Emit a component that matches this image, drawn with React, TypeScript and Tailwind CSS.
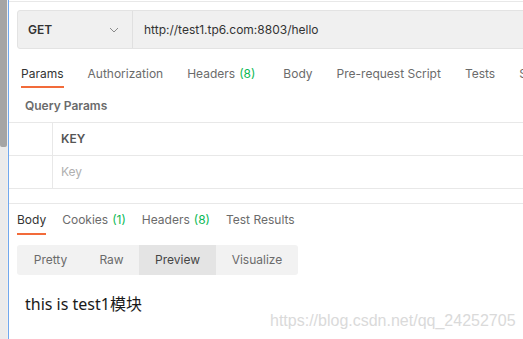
import React from "react";

const inter = { fontFamily: "Inter, 'Noto Sans', sans-serif" };

function Tab({
  label,
  count,
  active,
  className = "",
}: {
  label: string;
  count?: string;
  active?: boolean;
  className?: string;
}) {
  return (
    <div className={"relative h-full flex items-center shrink-0 whitespace-nowrap " + className}>
      <span className={active ? "text-[#333333]" : "text-[#6b6b6b]"}>{label}</span>
      {count && <span className="ml-[4px] text-[#0cb955]">{count}</span>}
      {active && <div className="absolute left-0 right-0 bottom-0 h-[2px] bg-[#f26b3a]" />}
    </div>
  );
}

export default function App() {
  return (
    <div className="w-[523px] h-[339px] bg-white overflow-hidden flex text-[12px]" style={inter}>
      {/* scrollbar */}
      <div className="w-[7px] h-full bg-[#ebebeb] shrink-0 flex flex-col">
        <div className="h-[147px] bg-[#a5a5a5] rounded-b-[2px]" />
      </div>
      <div className="w-[1px] h-full bg-[#f0f0f0] shrink-0" />
      <div className="w-[1px] h-full bg-[#70a8ee] shrink-0" />
      {/* main */}
      <div className="flex-1 min-w-0 flex flex-col relative">
        <div className="h-[1px] bg-white" />
        <div className="h-[1px] bg-[#e8e8e8]" />
        {/* url bar */}
        <div className="mt-[8px] ml-[8px] w-[560px] h-[39px] bg-[#f0f0f0] border border-[#e3e3e3] rounded-[3px] flex items-center shrink-0">
          <div className="w-[115px] h-full flex items-center justify-between pl-[10px] pr-[13px] border-r border-[#e0e0e0] shrink-0">
            <span className="font-semibold text-[#333333] text-[12px]">GET</span>
            <svg width="10" height="6" viewBox="0 0 10 6" fill="none">
              <path d="M1 1l4 4 4-4" stroke="#8a8a8a" strokeWidth="1" />
            </svg>
          </div>
          <span className="ml-[11px] text-[#333333] text-[12px]">http://test1.tp6.com:8803/hello</span>
        </div>
        {/* request tabs */}
        <div className="mt-[10px] h-[29px] flex gap-6 pl-[12px] shrink-0">
          <Tab label="Params" active />
          <Tab label="Authorization" />
          <Tab label="Headers" count="(8)" />
          <Tab label="Body" className="ml-[4px]" />
          <Tab label="Pre-request Script" />
          <Tab label="Tests" />
          <Tab label="Settings" />
        </div>
        {/* query params */}
        <div className="h-[34px] flex items-center pl-[16px] pt-[1px] font-semibold text-[#6b6b6b] shrink-0">
          Query Params
        </div>
        <div className="border-t border-[#e8e8e8] shrink-0">
          <div className="h-[33px] flex border-b border-[#e8e8e8]">
            <div className="w-[44px] border-r border-[#e8e8e8]" />
            <div className="flex items-center pl-[8px] font-semibold text-[#555555]">KEY</div>
          </div>
          <div className="h-[33px] flex border-b border-[#e8e8e8]">
            <div className="w-[44px] border-r border-[#e8e8e8]" />
            <div className="flex items-center pl-[8px] text-[#b0b0b0]">Key</div>
          </div>
        </div>
        <div className="h-[14px] shrink-0" />
        <div className="h-[1px] bg-[#e8e8e8] shrink-0" />
        {/* response tabs */}
        <div className="h-[31px] flex gap-4 pl-[8px] shrink-0">
          <Tab label="Body" active />
          <Tab label="Cookies" count="(1)" />
          <Tab label="Headers" count="(8)" />
          <Tab label="Test Results" />
        </div>
        {/* segmented */}
        <div className="mt-[10px] ml-[8px] w-[281px] h-[30px] bg-[#f2f2f2] rounded-[3px] flex text-[#6b6b6b] shrink-0 overflow-hidden">
          <div className="w-[67px] flex items-center justify-center">Pretty</div>
          <div className="w-[55px] flex items-center justify-center">Raw</div>
          <div className="w-[77px] flex items-center justify-center bg-[#e4e4e4] text-[#444444]">Preview</div>
          <div className="w-[82px] flex items-center justify-center">Visualize</div>
        </div>
        <div
          className="mt-[18px] ml-[16px] text-[16px] text-[#1a1a1a] leading-[22px]"
          style={{ fontFamily: "'Noto Sans', 'Noto Sans CJK SC', sans-serif" }}
        >
          this is test1模块
        </div>
        <div
          className="absolute left-[261px] top-[311px] text-[16px] text-[#dadada] leading-[20px] whitespace-nowrap"
          style={{ fontFamily: "'Liberation Sans', Arial, sans-serif" }}
        >
          https://blog.csdn.net/qq_24252705
        </div>
      </div>
    </div>
  );
}
